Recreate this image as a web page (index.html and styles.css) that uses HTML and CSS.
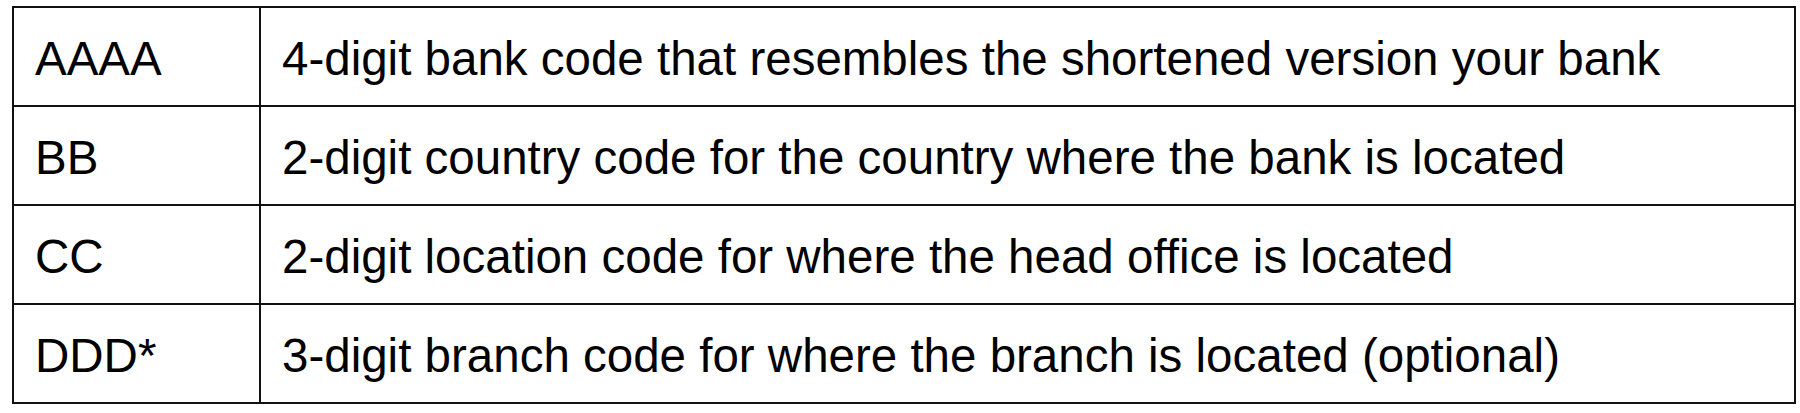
FILE: index.html
```html
<!DOCTYPE html>
<html lang="en">
<head>
<meta charset="utf-8">
<title>Bank code table</title>
<link rel="stylesheet" href="styles.css">
</head>
<body>
<table class="codes">
  <tbody>
    <tr><td class="code">AAAA</td><td class="desc">4-digit bank code that resembles the shortened version your bank</td></tr>
    <tr><td class="code">BB</td><td class="desc">2-digit country code for the country where the bank is located</td></tr>
    <tr><td class="code">CC</td><td class="desc">2-digit location code for where the head office is located</td></tr>
    <tr><td class="code">DDD*</td><td class="desc">3-digit branch code for where the branch is located (optional)</td></tr>
  </tbody>
</table>
</body>
</html>
```

FILE: styles.css
```css
html, body {
  margin: 0;
  padding: 0;
  background: #ffffff;
}

body {
  padding: 6px 0 0 12px;
}

.codes {
  border-collapse: collapse;
  width: 1784px;
  font-family: "Liberation Sans", Arial, sans-serif;
  font-size: 47.5px;
  color: #000;
}

.codes td {
  border: 2px solid #111;
  height: 99px;
  padding: 4px 21px 0;
  box-sizing: border-box;
  vertical-align: middle;
  line-height: 1;
  white-space: nowrap;
}

.codes .code {
  width: 247px;
}
```
